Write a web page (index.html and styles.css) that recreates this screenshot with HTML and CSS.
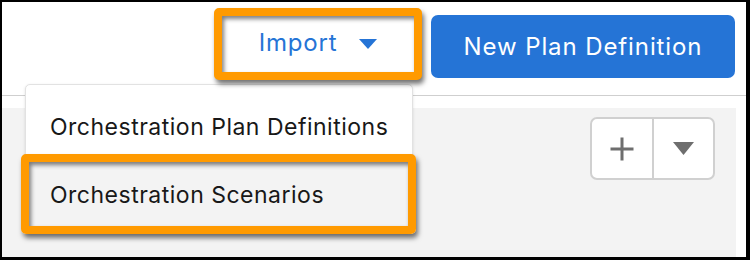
FILE: index.html
```html
<!DOCTYPE html>
<html>
<head>
<meta charset="utf-8">
<link rel="stylesheet" href="styles.css">
</head>
<body>
<div class="frame">
  <div class="header">
    <button class="import-btn">
      <span class="import-label">Import</span>
      <svg class="caret" width="18" height="10" viewBox="0 0 18 10"><polygon points="0,0 18,0 9,10" fill="#2574d6"/></svg>
    </button>
    <button class="new-btn">New Plan Definition</button>
  </div>
  <div class="content">
    <div class="btn-group">
      <div class="seg">
        <svg width="24" height="24" viewBox="0 0 24 24"><path d="M12 0.5V23.5M0.5 12H23.5" stroke="#6e6e6e" stroke-width="3" fill="none"/></svg>
      </div>
      <div class="seg seg-right">
        <svg width="21" height="13" viewBox="0 0 21 13"><polygon points="0,0 21,0 10.5,13" fill="#6e6e6e"/></svg>
      </div>
    </div>
  </div>
  <div class="menu">
    <div class="menu-item">Orchestration Plan Definitions</div>
    <div class="menu-item active">Orchestration Scenarios</div>
  </div>
  <div class="highlight hl-item"></div>
</div>
</body>
</html>
```
FILE: styles.css
```css
* { box-sizing: border-box; }
html, body { margin: 0; padding: 0; background: #fff; }
.frame {
  position: relative;
  width: 750px;
  height: 260px;
  border-style: solid;
  border-color: #000;
  border-width: 2px 4px 3px 2px;
  background: #fff;
  overflow: hidden;
  font-family: Inter, "Liberation Sans", sans-serif;
  display: flex;
  flex-direction: column;
}
.header {
  height: 94px;
  flex: none;
  border-bottom: 1px solid #cfcfcf;
  display: flex;
  justify-content: flex-end;
  align-items: flex-start;
  padding-right: 11px;
  gap: 9px;
}
.import-btn {
  margin-top: 6px;
  width: 208px;
  height: 72px;
  border: 8px solid #ff9a00;
  border-radius: 5px;
  background: #fff;
  display: flex;
  align-items: center;
  justify-content: center;
  gap: 22px;
  padding: 0 0 0 0;
  font-family: inherit;
  font-size: 24px;
  letter-spacing: 0.8px;
  color: #2574d6;
  box-shadow: 2px 4px 5px rgba(0,0,0,0.55), inset 2px 3px 4px rgba(0,0,0,0.5);
  position: relative;
  z-index: 3;
}
.import-label { line-height: 1; position: relative; top: -1px; }
.caret { display: block; }
.new-btn {
  margin-top: 13px;
  width: 304px;
  height: 63px;
  border: none;
  border-radius: 7px;
  background: #2574d6;
  color: #fff;
  font-family: inherit;
  font-size: 24px;
  letter-spacing: 0.9px;
  display: flex;
  align-items: center;
  justify-content: center;
  padding: 0;
}
.content {
  margin-top: 12px;
  margin-right: 10px;
  flex: 1;
  background: #f3f3f3;
  display: flex;
  justify-content: flex-end;
  align-items: flex-start;
  padding: 9px 21px 0 0;
}
.btn-group {
  display: flex;
  width: 125px;
  height: 63px;
  border: 2px solid #d0d0d0;
  border-radius: 7px;
  background: #fff;
}
.seg {
  flex: 1;
  display: flex;
  align-items: center;
  justify-content: center;
}
.seg-right { border-left: 2px solid #d0d0d0; }
.menu {
  position: absolute;
  left: 23px;
  top: 82px;
  width: 388px;
  height: 148px;
  background: #fff;
  border: 1px solid #e2e2e2;
  border-radius: 5px;
  box-shadow: 0 1px 3px rgba(0,0,0,0.12);
  padding-top: 8px;
  z-index: 2;
}
.menu-item {
  height: 68px;
  display: flex;
  align-items: center;
  padding-left: 24px;
  font-size: 23px;
  letter-spacing: 0.5px;
  color: #181818;
}
.menu-item.active { background: #f3f3f3; }
.highlight {
  position: absolute;
  border: 8px solid #ff9a00;
  border-radius: 5px;
  box-shadow: 2px 4px 5px rgba(0,0,0,0.55), inset 2px 3px 4px rgba(0,0,0,0.5);
  z-index: 4;
}
.hl-item { left: 19px; top: 152px; width: 395px; height: 80px; }
```
